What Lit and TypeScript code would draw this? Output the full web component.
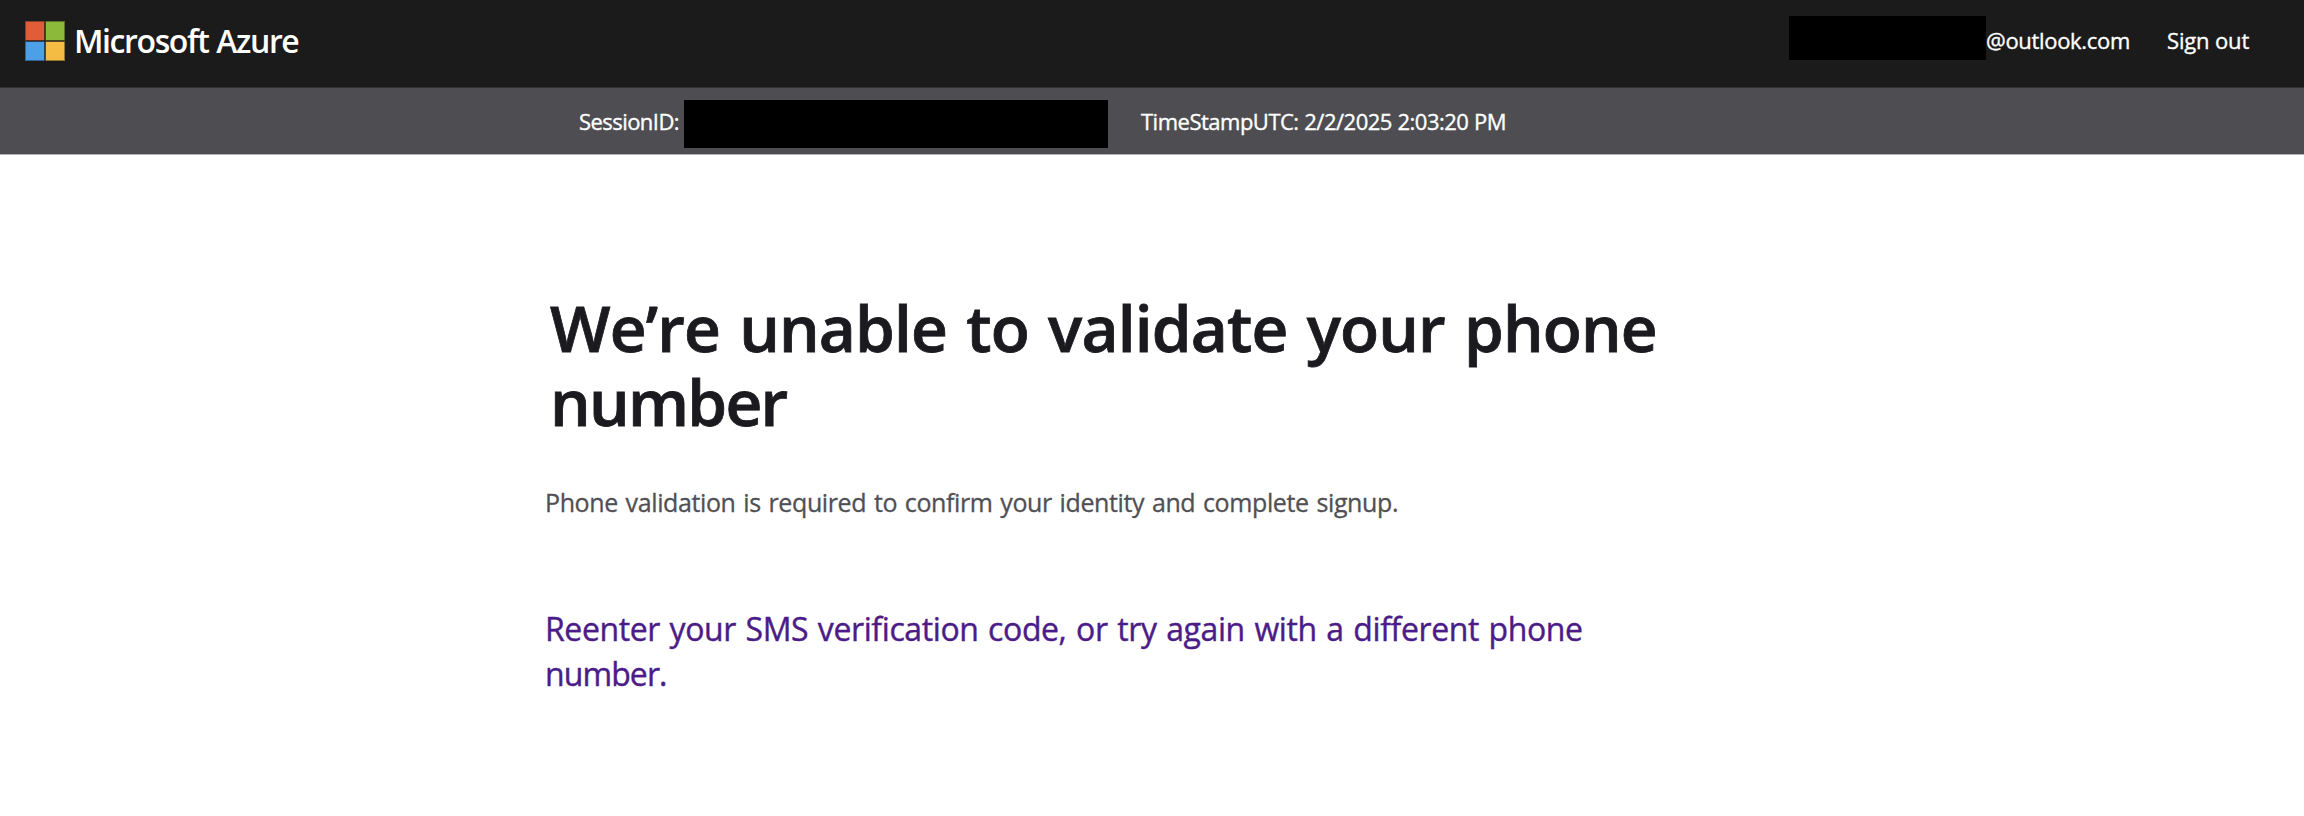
import { LitElement, html, css } from "lit";
import { customElement } from "lit/decorators.js";

@customElement("azure-header")
class AzureHeader extends LitElement {
  static styles = css`
    :host { display: block; }
    .bar {
      box-sizing: border-box;
      display: flex;
      justify-content: space-between;
      align-items: flex-start;
      height: 88px;
      padding: 0 54px 0 25px;
      background: #1b1b1b;
      border-bottom: 1px solid #323233;
      color: #fff;
      white-space: nowrap;
    }
    .brand { display: flex; align-items: flex-start; gap: 8px; }
    .logo { display: block; margin-top: 21px; }
    .name {
      margin-top: 21px;
      font-size: 32px;
      line-height: 40px;
      font-weight: 600;
      letter-spacing: -1.4px;
      word-spacing: 1px;
    }
    .account { display: flex; font-size: 22px; line-height: 30px; -webkit-text-stroke: 0.35px; }
    .redacted { width: 197px; height: 44px; margin-top: 16px; background: #000; }
    .mail { margin-top: 25px; width: 181px; letter-spacing: -0.32px; }
    .signout { margin-top: 25px; width: 83px; letter-spacing: -0.15px; }
  `;
  render() {
    return html`<header class="bar">
      <div class="brand">
        <svg class="logo" width="41" height="41" viewBox="0 0 41 41">
          <g stroke-width="1">
            <rect x="0.5" y="0.5" width="19" height="19" fill="#e05d37" stroke="#88402b" />
            <rect x="20.5" y="0.5" width="19" height="19" fill="#8cb939" stroke="#5a742c" />
            <rect x="0.5" y="20.5" width="19" height="19" fill="#4ca0e8" stroke="#356690" />
            <rect x="20.5" y="20.5" width="19" height="19" fill="#f4bc42" stroke="#957532" />
          </g>
          <path d="M20 0V40M0 20H40" stroke="#1b1b1b" stroke-width="1" />
        </svg>
        <span class="name">Microsoft Azure</span>
      </div>
      <div class="account">
        <div class="redacted"></div>
        <span class="mail">@outlook.com</span>
        <span class="signout">Sign out</span>
      </div>
    </header>`;
  }
}

@customElement("session-bar")
class SessionBar extends LitElement {
  static styles = css`
    :host { display: block; }
    .bar {
      box-sizing: border-box;
      display: flex;
      align-items: flex-start;
      height: 67px;
      padding-left: 579px;
      background: #4e4d52;
      border-bottom: 1px solid #b1b1b3;
      color: #fff;
      font-size: 22px;
      line-height: 30px;
      -webkit-text-stroke: 0.35px;
      white-space: nowrap;
    }
    .label { width: 105px; margin-top: 18px; letter-spacing: -0.55px; }
    .redacted { width: 424px; height: 48px; margin-top: 12px; background: #000; }
    .stamp { margin: 18px 0 0 33px; letter-spacing: -0.5px; word-spacing: 0.4px; }
  `;
  render() {
    return html`<div class="bar">
      <span class="label">SessionID:</span>
      <div class="redacted"></div>
      <span class="stamp">TimeStampUTC: 2/2/2025 2:03:20 PM</span>
    </div>`;
  }
}

@customElement("app-root")
class AppRoot extends LitElement {
  static styles = css`
    :host {
      display: block;
      min-height: 816px;
      background: #fff;
      font-family: "Open Sans", "Noto Sans", sans-serif;
    }
    .content { padding: 136px 0 0 545px; white-space: nowrap; }
    .title {
      margin: 0 0 0 5px;
      font-size: 64px;
      line-height: 74px;
      font-weight: 600;
      letter-spacing: -0.85px;
      word-spacing: 3.4px;
      -webkit-text-stroke: 0.8px;
      color: #1b1a1f;
    }
    .tail { letter-spacing: -1.7px; }
    .note {
      margin: 45px 0 0;
      font-size: 25px;
      line-height: 36px;
      letter-spacing: -0.38px;
      word-spacing: 1.6px;
      -webkit-text-stroke: 0.3px;
      color: #505054;
    }
    .retry {
      display: block;
      margin: 87px 0 0;
      font-size: 32px;
      line-height: 44.6px;
      letter-spacing: -0.4px;
      word-spacing: 1.7px;
      -webkit-text-stroke: 0.4px;
      color: #4b1c87;
      text-decoration: none;
    }
    .retry .tail { letter-spacing: -0.9px; }
  `;
  render() {
    return html`
      <azure-header></azure-header>
      <session-bar></session-bar>
      <main class="content">
        <h1 class="title">We’re unable to validate your phone<br /><span class="tail">number</span></h1>
        <p class="note">Phone validation is required to confirm your identity and complete signup.</p>
        <a class="retry" href="#">Reenter your SMS verification code, or try again with a different phone<br /><span class="tail">number.</span></a>
      </main>
    `;
  }
}
